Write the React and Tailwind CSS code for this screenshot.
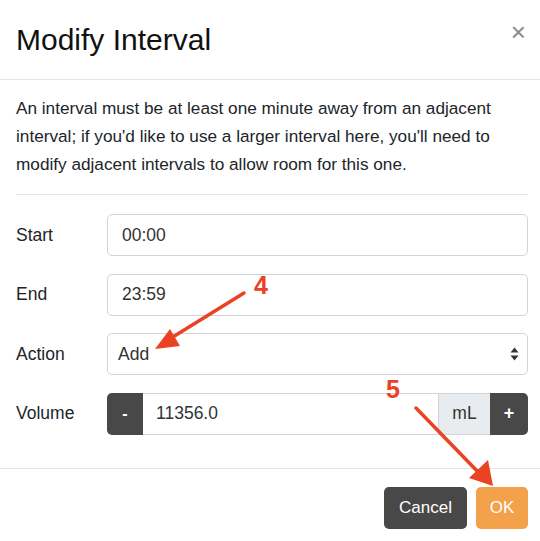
import React from "react"

const font = { fontFamily: '"Liberation Sans", Arial, sans-serif' }

function Row({ label, children }) {
  return (
    <div className="flex items-center h-[42px]">
      <label className="w-[91px] shrink-0 text-[17.5px] text-[#212529]">{label}</label>
      <div className="flex-1 h-full">{children}</div>
    </div>
  )
}

export default function App() {
  return (
    <div className="relative w-[540px] h-[541px] bg-white overflow-hidden" style={font}>
      <div className="flex items-center justify-between h-[80px] pl-4 pr-[14px] border-b border-[#e5e5e5]">
        <h1 className="text-[30px] text-[#111] leading-none">Modify Interval</h1>
        <span className="text-[26px] text-[#8a8a8a] leading-none -mt-4">×</span>
      </div>

      <div className="pl-4 pr-3 pt-[14px] pb-[33px]">
        <p className="text-[17.2px] leading-[28px] text-[#212529]">
          An interval must be at least one minute away from an adjacent interval; if you'd like to use a larger interval here, you'll need to modify adjacent intervals to allow room for this one.
        </p>
        <hr className="mt-[16px] mb-[19px] border-t border-[#e5e5e5]" />

        <div className="flex flex-col gap-[17.5px]">
          <Row label="Start">
            <div className="h-full border border-[#ced4da] rounded-[5px] flex items-center pl-[14px] text-[17.5px] text-[#333]">00:00</div>
          </Row>
          <Row label="End">
            <div className="h-full border border-[#ced4da] rounded-[5px] flex items-center pl-[14px] text-[17.5px] text-[#333]">23:59</div>
          </Row>
          <Row label="Action">
            <div className="h-full border border-[#ced4da] rounded-[5px] flex items-center justify-between pl-[10px] pr-[8px] text-[17.5px] text-[#333]">
              <span>Add</span>
              <svg width="9" height="14" viewBox="0 0 9 14">
                <path d="M4.5 0.5 L8.5 5.5 L0.5 5.5 Z" fill="#333" />
                <path d="M4.5 13.5 L8.5 8.5 L0.5 8.5 Z" fill="#333" />
              </svg>
            </div>
          </Row>
          <Row label="Volume">
            <div className="h-full flex">
              <div className="w-[36px] bg-[#484848] rounded-l-[5px] flex items-center justify-center text-white text-[16px] font-bold">-</div>
              <div className="flex-1 border-y border-[#ced4da] flex items-center pl-[13px] text-[17.5px] text-[#333]">11356.0</div>
              <div className="w-[52px] bg-[#e9ecef] border-y border-l border-[#ced4da] flex items-center justify-center text-[17.5px] text-[#333]">mL</div>
              <div className="w-[38px] bg-[#484848] rounded-r-[5px] flex items-center justify-center text-white text-[18px] font-bold">+</div>
            </div>
          </Row>
        </div>
      </div>

      <div className="border-t border-[#e5e5e5] flex justify-end gap-[9px] pr-3 pt-[18px]">
        <button className="w-[83px] h-[42px] bg-[#484848] rounded-[5px] text-white text-[17px]">Cancel</button>
        <button className="w-[52px] h-[42px] bg-[#f3a14b] rounded-[5px] text-white text-[17px]">OK</button>
      </div>

      <svg className="absolute inset-0 pointer-events-none" width="540" height="541" viewBox="0 0 540 541">
        <line x1="244" y1="293" x2="168" y2="340" stroke="#ea4223" strokeWidth="3.5" strokeLinecap="round" />
        <path d="M155 349 L170 329 L180 346 Z" fill="#ea4223" />
        <text x="254" y="294" fill="#ea4223" fontSize="25" fontWeight="bold" fontFamily="Liberation Sans, Arial, sans-serif">4</text>
        <line x1="416" y1="408" x2="480" y2="474" stroke="#ea4223" strokeWidth="3.5" strokeLinecap="round" />
        <path d="M493 486 L469 478 L488 460 Z" fill="#ea4223" />
        <text x="386" y="398" fill="#ea4223" fontSize="25" fontWeight="bold" fontFamily="Liberation Sans, Arial, sans-serif">5</text>
      </svg>
    </div>
  )
}
